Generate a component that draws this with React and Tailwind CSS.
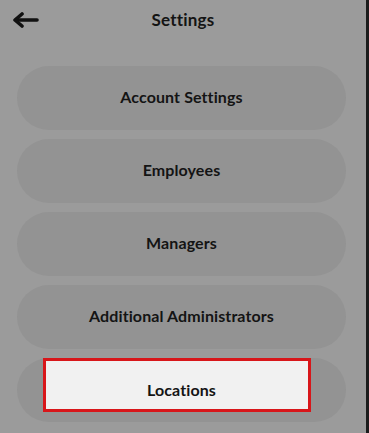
import React from "react";

const items = ["Account Settings", "Employees", "Managers", "Additional Administrators"];

export default function App() {
  return (
    <div className="w-[369px] h-[433px] overflow-hidden bg-[#9b9b9b] flex" style={{ fontFamily: "Lato, 'Open Sans', sans-serif" }}>
      <div className="flex-1 flex flex-col">
        <div className="h-[40px] relative flex items-center justify-center">
          <svg className="absolute left-[12px] top-[12px]" width="27" height="16" viewBox="0 0 27 16" fill="none">
            <path d="M25 8H4" stroke="#111" strokeWidth="3.6" strokeLinecap="round" />
            <path d="M10 2L3 8L10 14" stroke="#111" strokeWidth="3.6" strokeLinecap="round" strokeLinejoin="round" />
          </svg>
          <span className="text-[17px] font-bold text-[#141414] tracking-[0.2px]">Settings</span>
        </div>
        <div className="flex flex-col gap-[9px] pt-[26px] pl-[17px] pr-[20px]">
          {items.map((t) => (
            <div key={t} className="h-[64px] rounded-full bg-[#939393] flex items-center justify-center">
              <span className="text-[16px] font-bold text-[#141414] tracking-[0.1px] -translate-y-[1px]">{t}</span>
            </div>
          ))}
          <div className="h-[64px] rounded-full bg-[#939393] flex items-center justify-center relative">
            <div className="absolute left-[26px] top-0 w-[268px] h-[54px] border-[3px] border-[#d8161a] bg-[#f1f1f1]" />
            <span className="relative text-[16px] font-bold text-[#141414] tracking-[0.1px]">Locations</span>
          </div>
        </div>
      </div>
      <div className="w-[3px] bg-[#1b1b1b]" />
    </div>
  );
}
